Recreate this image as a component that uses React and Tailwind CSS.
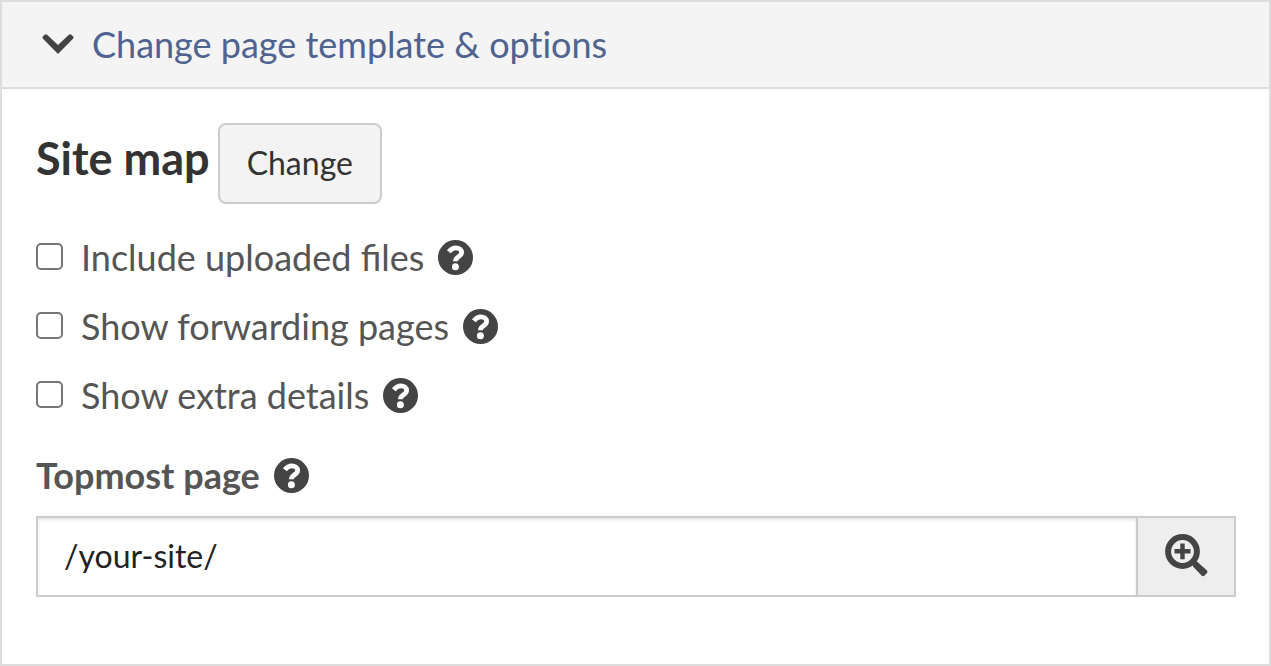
import { useState } from 'react';

const ChevronIcon = () => (
  <svg width="32" height="20" viewBox="0 0 32 20" aria-hidden="true" className="shrink-0">
    <path
      d="M1 4.8 Q0 3.4 1 2.3 L2.4 0.9 Q3.9 -0.2 5.4 0.9 L16 11 L26.6 0.9 Q28.1 -0.2 29.6 0.9 L31 2.3 Q32 3.4 31 4.8 L16 20 Z"
      fill="#444"
    />
  </svg>
);

const HelpIcon = () => (
  <svg width="35" height="35" viewBox="0 0 35 35" aria-hidden="true">
    <circle cx="17.5" cy="17.5" r="17.5" fill="#444" />
    <path
      d="M10.8 11.8 C13 9 15.3 7.9 17.8 7.9 C21.2 7.9 23.6 9.7 23.6 12.6 C23.6 16.9 17.4 16.6 17.4 21.2"
      fill="none"
      stroke="#fff"
      strokeWidth="4.8"
    />
    <circle cx="17.4" cy="26.8" r="3.5" fill="#fff" />
  </svg>
);

const ZoomInIcon = () => (
  <svg width="43" height="43" viewBox="0 0 43 43" aria-hidden="true">
    <circle cx="17.5" cy="17.5" r="14.4" fill="none" stroke="#444" strokeWidth="6" />
    <path d="M9.5 17.3 H25.5 M17.5 9.5 V25.3" stroke="#444" strokeWidth="4.4" />
    <path d="M28 28 L30 28 L32 27.5 L42 36.5 Q43 38 42 39 L39.5 41.5 Q38 43 36.5 41.5 L28 32.5 Z" fill="#444" />
  </svg>
);

const HelpButton = ({ label }) => (
  <button type="button" aria-label={label} className="mt-0.5 ml-[14px] cursor-pointer rounded-full">
    <HelpIcon />
  </button>
);

const OPTIONS = [
  { id: 'include-files', label: 'Include uploaded files' },
  { id: 'show-forwarding', label: 'Show forwarding pages' },
  { id: 'show-details', label: 'Show extra details' },
];

const OptionRow = ({ id, label }) => (
  <div className="flex h-[69px] items-center">
    <input
      id={id}
      type="checkbox"
      className="mr-[18px] size-[27px] shrink-0 appearance-none rounded-[5px] border-2 border-[#767676] bg-white checked:bg-[#4f6390]"
    />
    <label htmlFor={id}>{label}</label>
    <HelpButton label={`Help: ${label}`} />
  </div>
);

const App = () => {
  const [open, setOpen] = useState(true);
  const [topPage, setTopPage] = useState('/your-site/');

  return (
    <section className="min-h-screen border-2 border-[#ddd] bg-white font-[Lato,sans-serif] text-4xl text-[#555]">
      <h2 className="border-b-2 border-[#ddd] bg-[#f4f4f4]">
        <button
          type="button"
          aria-expanded={open}
          onClick={() => setOpen(!open)}
          className="flex h-[85px] w-full cursor-pointer items-center gap-[18px] px-10 pb-0.5 text-[#4f6390] [font-variant-ligatures:none]"
        >
          <ChevronIcon />
          Change page template &amp; options
        </button>
      </h2>

      {open && (
        <div className="pt-[34px] pr-[33px] pb-16 pl-[34px]">
          <div className="mb-[18px] flex items-center gap-2">
            <h3 className="pb-3 text-[45px] leading-[60px] font-bold text-[#333]">Site map</h3>
            <button
              type="button"
              className="h-[81px] cursor-pointer rounded-lg border-2 border-[#ccc] bg-[#f3f3f3] px-[27px] pb-0.5 text-[32px] text-[#333]"
            >
              Change
            </button>
          </div>

          {OPTIONS.map((option) => (
            <OptionRow key={option.id} {...option} />
          ))}

          <div className="mt-[11px] flex h-[69px] items-center">
            <label htmlFor="topmost-page" className="font-bold">Topmost page</label>
            <HelpButton label="Help: Topmost page" />
          </div>

          <div className="mt-[7px] flex h-[81px] border-2 border-[#ccc]">
            <input
              id="topmost-page"
              type="text"
              value={topPage}
              onChange={(e) => setTopPage(e.target.value)}
              className="min-w-0 flex-1 bg-white px-[26px] pb-0.5 text-[32px] text-[#222] shadow-[inset_0_2px_3px_rgba(0,0,0,0.1)] outline-none [font-variant-ligatures:none]"
            />
            <button
              type="button"
              aria-label="Browse pages"
              className="flex w-[98px] cursor-pointer items-center justify-center border-l-2 border-[#ccc] bg-[#eee] pb-0.5"
            >
              <ZoomInIcon />
            </button>
          </div>
        </div>
      )}
    </section>
  );
};

export default App;
